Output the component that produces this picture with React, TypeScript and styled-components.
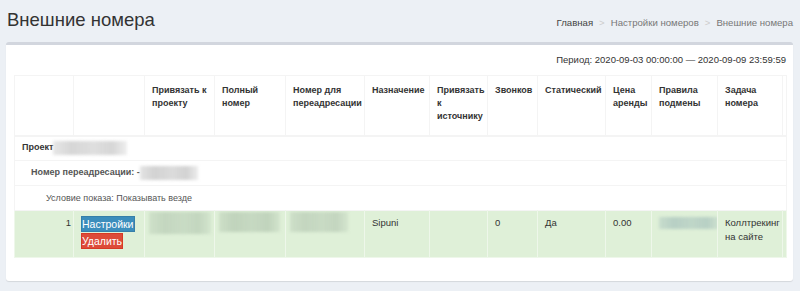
import styled, { createGlobalStyle } from 'styled-components';

const GlobalStyle = createGlobalStyle`
  body {
    margin: 0;
    background: #ecf0f5;
    font-family: 'Liberation Sans', Arial, sans-serif;
    color: #333;
  }
`;

const widths = [59, 71, 70, 71, 79, 65, 58, 50, 68, 46, 66, 65, 4];

const headers = [
  '',
  '',
  'Привязать к проекту',
  'Полный номер',
  'Номер для переадресации',
  'Назначение',
  'Привязать к источнику',
  'Звонков',
  'Статический',
  'Цена аренды',
  'Правила подмены',
  'Задача номера',
  '',
];

const App = () => {
  return (
    <Page>
      <GlobalStyle />
      <ContentHeader>
        <Title>Внешние номера</Title>
        <Breadcrumb>
          <Crumb $active>Главная</Crumb>
          <Sep>&gt;</Sep>
          <Crumb>Настройки номеров</Crumb>
          <Sep>&gt;</Sep>
          <Crumb>Внешние номера</Crumb>
        </Breadcrumb>
      </ContentHeader>

      <Box>
        <Period>Период: 2020-09-03 00:00:00 — 2020-09-09 23:59:59</Period>
        <Table>
          <colgroup>
            {widths.map((w, i) => (
              <col key={i} style={{ width: w }} />
            ))}
          </colgroup>
          <thead>
            <HeadRow>
              {headers.map((h, i) => (
                <Th key={i}>{h}</Th>
              ))}
            </HeadRow>
          </thead>
          <tbody>
            <GroupRow>
              <GroupCell colSpan={13} $indent={7} $bold>
                Проект
                <Blur $w={74} $h={14} $color="#d6d6d6" />
              </GroupCell>
            </GroupRow>
            <GroupRow>
              <GroupCell colSpan={13} $indent={16} $bold $muted>
                Номер переадресации: -
                <Blur $w={58} $h={14} $color="#d2d2d2" />
              </GroupCell>
            </GroupRow>
            <GroupRow>
              <GroupCell colSpan={13} $indent={31} $muted>
                Условие показа: Показывать везде
              </GroupCell>
            </GroupRow>
            <DataRow>
              <Td $right>1</Td>
              <Td>
                <Btn $color="#3c8dbc" $border="#367fa9">Настройки</Btn>
                <Btn $color="#dd4b39" $border="#d73925">Удалить</Btn>
              </Td>
              <Td $tight>
                <Blur $w={62} $h={22} $color="#c3d6bf" />
              </Td>
              <Td $tight>
                <Blur $w={61} $h={20} $color="#c0d3bc" />
              </Td>
              <Td $tight>
                <Blur $w={58} $h={20} $color="#c3d5bf" />
              </Td>
              <Td>Sipuni</Td>
              <Td></Td>
              <Td>0</Td>
              <Td>Да</Td>
              <Td>0.00</Td>
              <Td>
                <Blur $w={60} $h={12} $color="#b7cfc4" />
              </Td>
              <Td>Коллтрекинг на сайте</Td>
              <Td $empty></Td>
            </DataRow>
          </tbody>
        </Table>
      </Box>
    </Page>
  );
};

export default App;

const Page = styled.div`
  width: 800px;
  height: 291px;
  overflow: hidden;
`;

const ContentHeader = styled.div`
  height: 42px;
  display: flex;
  align-items: center;
  justify-content: space-between;
  padding: 0 7px;
  box-sizing: border-box;
`;

const Title = styled.h1`
  margin: 0 0 2px 0;
  font-size: 18.5px;
  font-weight: 400;
  color: #333;
  line-height: 24px;
`;

const Breadcrumb = styled.div`
  display: flex;
  align-items: center;
  font-size: 9.6px;
  margin-top: 2px;
`;

const Crumb = styled.span<{ $active?: boolean }>`
  color: ${(p) => (p.$active ? '#444' : '#777')};
`;

const Sep = styled.span`
  color: #ccc;
  padding: 0 6px;
`;

const Box = styled.div`
  margin: 0 7px 0 6px;
  background: #fff;
  border-top: 3px solid #d2d6de;
  border-radius: 3px;
  box-shadow: 0 1px 1px rgba(0, 0, 0, 0.1);
  padding: 8px 7px 24px 8px;
  height: 239px;
  box-sizing: border-box;
`;

const Period = styled.div`
  text-align: right;
  font-size: 9.5px;
  line-height: 14px;
  color: #333;
  margin-bottom: 8px;
`;

const Table = styled.table`
  width: 772px;
  table-layout: fixed;
  border-collapse: collapse;
  border: 1px solid #f4f4f4;
`;

const HeadRow = styled.tr`
  height: 60px;
`;

const Th = styled.th`
  padding: 8px 2px 8px 7px;
  text-align: left;
  vertical-align: top;
  font-size: 9px;
  line-height: 13px;
  font-weight: 700;
  color: #333;
  border: 1px solid #f4f4f4;
  border-bottom-width: 2px;
  overflow: hidden;
`;

const GroupRow = styled.tr`
  height: 25px;
`;

const GroupCell = styled.td<{ $indent: number; $bold?: boolean; $muted?: boolean }>`
  padding: 0 7px 0 ${(p) => p.$indent}px;
  font-size: 9px;
  font-weight: ${(p) => (p.$bold ? 700 : 400)};
  color: ${(p) => (p.$muted ? '#555' : '#333')};
  border-top: 1px solid #f4f4f4;
  vertical-align: middle;
  white-space: nowrap;
`;

const DataRow = styled.tr`
  height: 47px;
  background: #dff0d8;
`;

const Td = styled.td<{ $right?: boolean; $tight?: boolean; $empty?: boolean }>`
  padding: ${(p) => (p.$tight ? '1px 4px' : p.$empty ? '0' : '5px 2px 5px 7px')};
  vertical-align: top;
  text-align: ${(p) => (p.$right ? 'right' : 'left')};
  font-size: 9.5px;
  line-height: 14px;
  color: #333;
  border: 1px solid #eef7ea;
  border-top-color: #f4f4f4;
  overflow: hidden;
`;

const Btn = styled.div<{ $color: string; $border: string }>`
  display: table;
  margin-top: ${(p) => (p.$color === '#3c8dbc' ? '0' : '1px')};
  padding: 1px 5px;
  font-size: 10.5px;
  line-height: 14px;
  color: #fff;
  background: ${(p) => p.$color};
  border: 1px solid ${(p) => p.$border};
  border-radius: 3px;
`;

const Blur = styled.span<{ $w: number; $h: number; $color: string }>`
  display: inline-block;
  vertical-align: middle;
  width: ${(p) => p.$w}px;
  height: ${(p) => p.$h}px;
  background: linear-gradient(
    90deg,
    ${(p) => p.$color}99 0%,
    ${(p) => p.$color} 25%,
    ${(p) => p.$color}cc 55%,
    ${(p) => p.$color} 80%,
    ${(p) => p.$color}66 100%
  );
  filter: blur(1.5px);
`;
